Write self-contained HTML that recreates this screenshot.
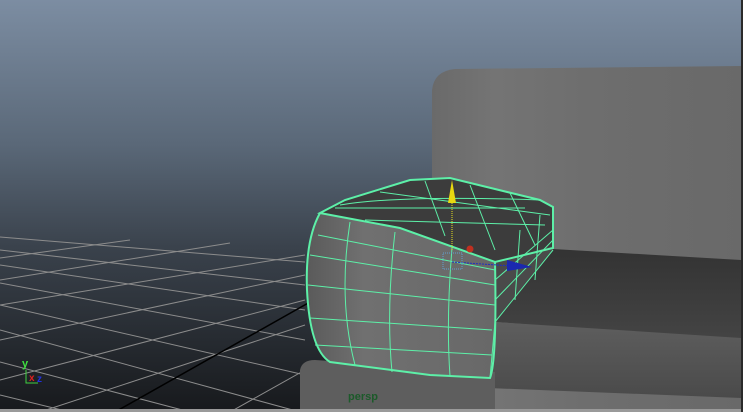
<!DOCTYPE html>
<html><head><style>
html,body{margin:0;padding:0;width:743px;height:412px;overflow:hidden;background:#2a2e33}
svg{display:block}
text{font-family:"Liberation Sans",sans-serif;font-weight:bold}
</style></head><body>
<svg width="743" height="412" viewBox="0 0 743 412">
<defs>
<linearGradient id="bg" x1="0" y1="0" x2="0" y2="1">
<stop offset="0" stop-color="#7c8da2"/>
<stop offset="0.35" stop-color="#5a6878"/>
<stop offset="0.6" stop-color="#3a424c"/>
<stop offset="1" stop-color="#17191c"/>
</linearGradient>
<linearGradient id="back" x1="0" y1="0" x2="1" y2="0">
<stop offset="0" stop-color="#6a6a6a"/>
<stop offset="0.2" stop-color="#747474"/>
<stop offset="0.5" stop-color="#6e6e6e"/>
<stop offset="1" stop-color="#696969"/>
</linearGradient>
<linearGradient id="seatTop" x1="0" y1="0" x2="0" y2="1">
<stop offset="0" stop-color="#333333"/>
<stop offset="1" stop-color="#444444"/>
</linearGradient>
<linearGradient id="seatFront" x1="0" y1="0" x2="0" y2="1">
<stop offset="0" stop-color="#5e5e5e"/>
<stop offset="1" stop-color="#4a4a4a"/>
</linearGradient>
<linearGradient id="armFront" x1="0" y1="0" x2="1" y2="0">
<stop offset="0" stop-color="#5a5a5a"/>
<stop offset="0.3" stop-color="#707070"/>
<stop offset="1" stop-color="#686868"/>
</linearGradient>
</defs>
<rect width="743" height="412" fill="url(#bg)"/>
<!-- grid -->
<g stroke="#8c8c8c" stroke-width="1" fill="none">
<path d="M0 237 L305 262"/><path d="M0 250 L305 285"/><path d="M0 265 L305 310"/>
<path d="M0 283 L305 340"/><path d="M0 305 L305 375"/><path d="M0 330 L300 412"/>
<path d="M0 362 L190 412"/><path d="M0 395 L70 412"/>
<path d="M0 258 L130 240"/><path d="M0 280 L230 243"/><path d="M0 305 L305 255"/>
<path d="M0 340 L305 275"/><path d="M0 380 L305 300"/><path d="M40 412 L305 325"/>
<path d="M230 412 L305 370"/>
</g>
<path d="M115 412 L310 302" stroke="#000" stroke-width="1.5"/>
<!-- backrest -->
<path d="M432 200 L432 90 Q434 71 455 69 L741 66 L741 412 L432 412 Z" fill="url(#back)"/>
<!-- seat -->
<path d="M553 249 L741 260 L741 340 L495 322 Z" fill="url(#seatTop)"/>
<path d="M495 322 L741 338 L741 398 L488 388 Z" fill="url(#seatFront)"/>
<!-- base under arm -->
<path d="M300 412 L300 370 Q302 360 315 360 L495 372 L495 412 Z" fill="#5e5e5e"/>
<!-- arm -->
<path d="M320 213 L345 200 L410 180 L450 178 L540 200 L553 207 L553 248 L495 262 L400 228 Z" fill="#3c3c3c"/>
<path d="M495 262 L553 246 L553 250 L495 322 Z" fill="#4a4a4a"/>
<path d="M320 213 Q305 240 307 290 Q310 350 330 362 L430 375 L490 378 Q497 360 495 262 L400 228 Z" fill="url(#armFront)"/>
<!-- wireframe -->
<g stroke="#5df0a8" stroke-width="1" fill="none">
<path d="M320 213 L345 200 L410 180 L450 178 L540 200 L553 207 L553 248 L495 262 L400 228 Z" stroke-width="2"/>
<path d="M320 213 Q305 240 307 290 Q310 350 330 362 L430 375 L490 378 Q497 360 495 262" stroke-width="2"/>
<path d="M490 378 L495 322 L553 250"/>
<path d="M335 208 L525 208"/><path d="M365 220 L545 225"/><path d="M380 192 L550 215"/>
<path d="M425 181 L445 236"/><path d="M470 185 L495 250"/><path d="M510 193 L535 245"/>
<path d="M340 205 Q400 195 540 200"/>
<path d="M310 255 L495 285"/><path d="M308 285 L495 305"/><path d="M310 318 L492 330"/>
<path d="M315 345 L492 355"/><path d="M318 235 L495 270"/>
<path d="M350 222 Q338 300 355 365"/><path d="M395 232 Q386 310 392 372"/>
<path d="M452 248 Q446 320 450 376"/>
<path d="M495 300 L553 240"/><path d="M495 280 L553 230"/><path d="M515 300 L520 230"/><path d="M535 280 L540 215"/>
</g>
<!-- manipulator -->
<path d="M452 250 L452 195" stroke="#e8e020" stroke-dasharray="1 1"/>
<path d="M448 203 L452 180 L456 203 Z" fill="#e8d810"/>
<path d="M452 262 L512 266" stroke="#2030c0" stroke-dasharray="2 1"/>
<path d="M507 260 L532 267 L507 271 Z" fill="#1a28b0"/>
<circle cx="470" cy="249" r="3.5" fill="#c03020"/>
<rect x="443" y="253" width="19" height="16" fill="none" stroke="#60a0d0" stroke-dasharray="1 1"/>
<!-- axis -->
<path d="M26 370 L26 383 L38 383" stroke="#40d040" fill="none"/>
<text x="22" y="367" font-size="11" fill="#40e040">y</text>
<text x="29" y="381" font-size="10" fill="#e02020">x</text>
<text x="37" y="382" font-size="10" fill="#2030e0">z</text>
<text x="348" y="400" font-size="11" fill="#1c5a2a">persp</text>
<rect x="0" y="409" width="743" height="3" fill="#9a9a9a"/>
<rect x="741" y="0" width="2" height="412" fill="#2a2a2a"/>
</svg>
</body></html>
